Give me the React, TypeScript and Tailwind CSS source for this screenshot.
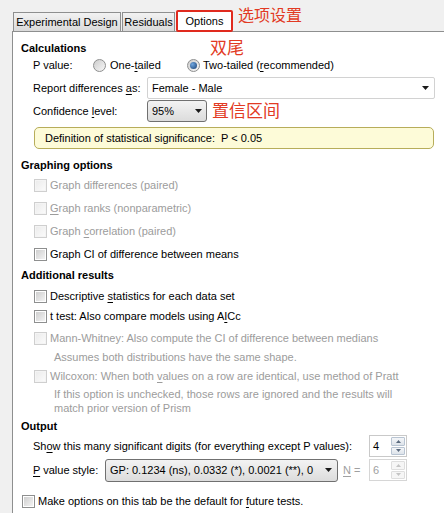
import React from 'react';

const U: React.FC<{ children: React.ReactNode }> = ({ children }) => (
  <span className="underline decoration-1 underline-offset-2">{children}</span>
);

const Arrow: React.FC<{ gray?: boolean }> = ({ gray }) => (
  <svg width="7" height="4" viewBox="0 0 7 4" className="shrink-0">
    <path d="M0 0h7L3.5 4z" fill={gray ? '#a8a8a8' : '#1a1a1a'} />
  </svg>
);

const Checkbox: React.FC<{ disabled?: boolean }> = ({ disabled }) => (
  <span
    className={
      disabled
        ? 'w-[13px] h-[13px] shrink-0 border border-[#cfcfcf] bg-[#f4f4f4] p-[1px]'
        : 'w-[13px] h-[13px] shrink-0 border border-[#8e8f8f] bg-white p-[1px]'
    }
  >
    <span
      className={
        disabled
          ? 'block w-full h-full bg-gradient-to-br from-[#ececec] to-[#fafafa]'
          : 'block w-full h-full bg-gradient-to-br from-[#cfcfcf] to-[#f3f3f3]'
      }
    />
  </span>
);

const Radio: React.FC<{ checked?: boolean }> = ({ checked }) => (
  <span className="w-[13px] h-[13px] shrink-0 rounded-full border border-[#8e8f8f] bg-gradient-to-br from-[#cdcdcd] to-[#f7f7f7] flex items-center justify-center">
    {checked && (
      <span className="w-[7px] h-[7px] rounded-full bg-[radial-gradient(circle_at_35%_35%,#6fa6df,#173f73)]" />
    )}
  </span>
);

const Spinner: React.FC<{ value: string; disabled?: boolean }> = ({ value, disabled }) => (
  <div
    className={
      'ml-auto mr-[37px] w-[38px] h-[22px] border flex items-stretch bg-white ' +
      (disabled ? 'border-[#d6d6d6] text-[#a0a0a0]' : 'border-[#c9c9c9] text-black')
    }
  >
    <span className="flex-1 pl-[3px] flex items-center">{value}</span>
    <div className="w-[16px] flex flex-col gap-[1px] p-[1px]">
      {[0, 1].map((i) => (
        <div
          key={i}
          className={
            'flex-1 flex items-center justify-center border rounded-[1px] ' +
            (disabled
              ? 'border-[#dedede] bg-[#f6f6f6]'
              : 'border-[#b8c4d2] bg-gradient-to-b from-[#f4f6f9] to-[#dde3ea]')
          }
        >
          <svg width="5" height="3" viewBox="0 0 5 3">
            <path
              d={i === 0 ? 'M0 3h5L2.5 0z' : 'M0 0h5L2.5 3z'}
              fill={disabled ? '#c4c4c4' : '#5a6a7e'}
            />
          </svg>
        </div>
      ))}
    </div>
  </div>
);

const CheckRow: React.FC<{ disabled?: boolean; h: string; children: React.ReactNode }> = ({
  disabled,
  h,
  children,
}) => (
  <div className={`flex items-center gap-[3px] pl-[21px] ${h} ${disabled ? 'text-[#9c9c9c]' : 'text-black'}`}>
    <Checkbox disabled={disabled} />
    <span>{children}</span>
  </div>
);

export default function App() {
  return (
    <div
      className="w-[444px] h-[513px] overflow-hidden bg-[#f0f0f0] text-[11px] text-black leading-none"
      style={{ fontFamily: '"Liberation Sans", "Noto Sans CJK SC", sans-serif' }}
    >
      {/* tab strip */}
      <div className="h-[31px] flex items-end pl-[13px] relative">
        <div className="h-[19px] w-[108px] whitespace-nowrap border border-b-0 border-[#8e8f8f] bg-gradient-to-b from-[#f2f2f2] to-[#dadada] flex items-center justify-center">
          Experimental Design
        </div>
        <div className="h-[19px] w-[53px] ml-[1px] border border-b-0 border-[#8e8f8f] bg-gradient-to-b from-[#f2f2f2] to-[#dadada] flex items-center justify-center">
          Residuals
        </div>
        <div className="h-[22px] w-[57px] ml-[1px] mb-[-1px] border-2 border-[#e02a1e] rounded-[2px] bg-white flex items-center justify-center z-10">
          Options
        </div>
        <span className="ml-[5px] self-start mt-[8px] text-[16px] text-[#e23a23]">选项设置</span>
      </div>

      {/* panel */}
      <div className="ml-[12px] h-[482px] border-l border-t border-[#8e8f8f] bg-white">
        <div className="h-[7px]" />
        {/* Calculations */}
        <div className="h-[18px] flex items-center pl-[8px]">
          <span className="w-[189px] font-bold">Calculations</span>
          <span className="text-[17px] text-[#e23a23]">双尾</span>
        </div>
        <div className="h-[16px] flex items-center pl-[20px]">
          <span className="w-[60px]">P value:</span>
          <Radio />
          <span className="ml-[4px] w-[77px]">
            One-<U>t</U>ailed
          </span>
          <Radio checked />
          <span className="ml-[3px]">
            Two-tailed (<U>r</U>ecommended)
          </span>
        </div>
        <div className="h-[4px]" />
        <div className="h-[22px] flex items-center pl-[20px]">
          <span className="w-[114px]">
            Report differences <U>a</U>s:
          </span>
          <div className="w-[288px] h-[22px] border border-[#d2d2d2] rounded-[2px] bg-white flex items-center pl-[4px] pr-[5px]">
            <span className="flex-1">Female - Male</span>
            <Arrow />
          </div>
        </div>
        <div className="h-[1px]" />
        <div className="h-[22px] flex items-center pl-[20px]">
          <span className="w-[114px]">
            Confidence <U>l</U>evel:
          </span>
          <div className="w-[60px] h-[22px] border border-[#707070] rounded-[3px] bg-gradient-to-b from-[#f3f3f3] to-[#dcdcdc] flex items-center pl-[4px] pr-[4px]">
            <span className="flex-1">95%</span>
            <Arrow />
          </div>
          <span className="ml-[5px] text-[17px] text-[#e23a23]">置信区间</span>
        </div>
        <div className="h-[5px]" />
        <div className="ml-[21px] w-[400px] h-[22px] border border-[#b7ad5a] rounded-[5px] bg-[#fdfbd8] flex items-center pl-[10px]">
          Definition of statistical significance:&nbsp; P &lt; 0.05
        </div>

        {/* Graphing options */}
        <div className="h-[7px]" />
        <div className="h-[18px] flex items-center pl-[8px] font-bold">Graphing options</div>
        <CheckRow disabled h="h-[23px]">Graph differences (paired)</CheckRow>
        <CheckRow disabled h="h-[23px]">
          <U>G</U>raph ranks (nonparametric)
        </CheckRow>
        <CheckRow disabled h="h-[23px]">
          Graph <U>c</U>orrelation (paired)
        </CheckRow>
        <CheckRow h="h-[23px]">Graph CI of difference between means</CheckRow>

        {/* Additional results */}
        <div className="h-[18px] flex items-center pl-[8px] font-bold">Additional results</div>
        <div className="h-[2px]" />
        <CheckRow h="h-[20px]">
          Descriptive <U>s</U>tatistics for each data set
        </CheckRow>
        <CheckRow h="h-[21px]">
          t test: Also compare models using A<U>I</U>Cc
        </CheckRow>
        <CheckRow disabled h="h-[22px]">
          Mann-Whitney: Also compute the CI of difference between medians
        </CheckRow>
        <div className="h-[16px] flex items-center pl-[41px] text-[#9c9c9c]">
          Assumes both distributions have the same shape.
        </div>
        <div className="h-[1px]" />
        <CheckRow disabled h="h-[20px]">
          Wilcoxon: When both <U>v</U>alues on a row are identical, use method of Pratt
        </CheckRow>
        <div className="pl-[41px] pt-[1px] text-[#9c9c9c] leading-[14px] h-[31px]">
          If this option is unchecked, those rows are ignored and the results will
          <br />
          match prior version of Prism
        </div>

        {/* Output */}
        <div className="h-[18px] flex items-center pl-[8px] font-bold">Output</div>
        <div className="h-[22px] flex items-center pl-[20px]">
          <span>
            Sh<U>o</U>w this many significant digits (for everything except P values):
          </span>
          <Spinner value="4" />
        </div>
        <div className="h-[2px]" />
        <div className="h-[22px] flex items-center pl-[20px]">
          <span className="w-[72px]">
            <U>P</U> value style:
          </span>
          <div className="w-[233px] h-[23px] border border-[#707070] rounded-[3px] bg-gradient-to-b from-[#f3f3f3] to-[#dcdcdc] flex items-center pl-[4px] pr-[5px]">
            <span className="flex-1 whitespace-nowrap overflow-hidden">
              GP: 0.1234 (ns), 0.0332 (*), 0.0021 (**), 0
            </span>
            <Arrow />
          </div>
          <span className="ml-[5px] text-[#a0a0a0]">
            <U>N</U> =
          </span>
          <Spinner value="6" disabled />
        </div>
        <div className="h-[10px]" />
        <div className="h-[21px] flex items-center gap-[3px] pl-[9px]">
          <Checkbox />
          <span>
            Make options on this tab be the default for <U>f</U>uture tests.
          </span>
        </div>
      </div>
    </div>
  );
}
